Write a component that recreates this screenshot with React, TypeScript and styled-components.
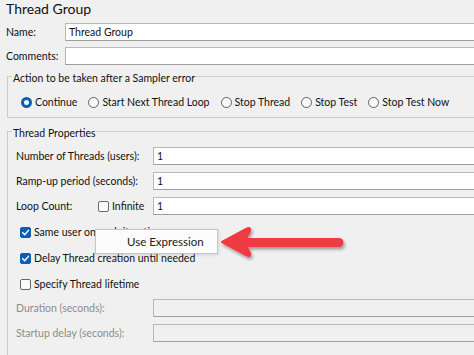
import styled, { createGlobalStyle } from "styled-components";

const GlobalStyle = createGlobalStyle`
	html, body {
		margin: 0;
		padding: 0;
		background: #f0f0f0;
		overflow: hidden;
	}
	body {
		font-family: Lato, "Noto Sans", sans-serif;
		font-size: 10.5px;
		color: #111111;
	}
`;

const Page = styled.div`
	position: relative;
	width: 560px;
	padding-left: 6px;
`;

const Title = styled.div`
	font-size: 14px;
	line-height: 18px;
	height: 18px;
`;

const TopRow = styled.div<{ $top: number }>`
	display: grid;
	grid-template-columns: 59px 1fr;
	align-items: center;
	margin-top: ${(p) => p.$top}px;
`;

const TextField = styled.div<{ $disabled?: boolean }>`
	height: 18px;
	box-sizing: border-box;
	border: 1px solid #b8b8b8;
	border-bottom-color: #9e9e9e;
	background: ${(p) => (p.$disabled ? "#f0f0f0" : "#ffffff")};
	padding-left: 3px;
	line-height: 16px;
`;

const Group = styled.fieldset<{ $top: number; $bottom: number }>`
	margin: ${(p) => p.$top}px 0 0 1px;
	padding: 0 0 ${(p) => p.$bottom}px 4px;
	border: 1px solid #cbcbcb;
	min-width: 0;
`;

const Legend = styled.legend`
	padding: 4px 1px 0;
	line-height: 14px;
`;

const RadioRow = styled.div`
	display: flex;
	align-items: center;
	gap: 11px;
	height: 18px;
	margin-top: 8px;
	padding-left: 9px;
`;

const Option = styled.label`
	display: flex;
	align-items: center;
	gap: 3px;
	white-space: nowrap;
`;

const Radio = styled.span<{ $checked?: boolean }>`
	width: 11px;
	height: 11px;
	box-sizing: border-box;
	border-radius: 50%;
	border: ${(p) => (p.$checked ? "3px solid #0a5fb4" : "1px solid #5f5f5f")};
	background: #fafafa;
`;

const Check = styled.span<{ $checked?: boolean }>`
	width: 11px;
	height: 11px;
	box-sizing: border-box;
	border-radius: 2px;
	border: 1px solid ${(p) => (p.$checked ? "#0a5fb4" : "#6a6a6a")};
	background: ${(p) => (p.$checked ? "#0a5fb4" : "#fafafa")};
	display: flex;
	align-items: center;
	justify-content: center;
`;

const FieldRow = styled.div<{ $top: number }>`
	display: grid;
	grid-template-columns: 137px 1fr;
	align-items: center;
	margin-top: ${(p) => p.$top}px;
	padding-left: 4px;
`;

const LoopLabel = styled.div`
	display: grid;
	grid-template-columns: 82px 1fr;
	align-items: center;
`;

const Label = styled.span<{ $disabled?: boolean }>`
	color: ${(p) => (p.$disabled ? "#8d8d8d" : "#111111")};
	white-space: nowrap;
`;

const CheckRow = styled.div<{ $top: number }>`
	height: 18px;
	display: flex;
	align-items: center;
	margin-top: ${(p) => p.$top}px;
	padding-left: 8px;
`;

const Popup = styled.div`
	position: absolute;
	left: 95px;
	top: 229px;
	width: 123px;
	height: 25px;
	box-sizing: border-box;
	background: #fbfbfb;
	border: 1px solid #c6c6c6;
	box-shadow: 1px 1px 3px rgba(0, 0, 0, 0.12);
	padding-left: 31px;
	line-height: 23px;
	font-size: 11.5px;
	color: #202020;
	white-space: nowrap;
`;

const Arrow = styled.svg`
	position: absolute;
	left: 215px;
	top: 220px;
	overflow: visible;
`;

function Tick() {
	return (
		<svg width='9' height='9' viewBox='0 0 9 9'>
			<path
				d='M1.5 4.6 L3.6 6.7 L7.6 2.2'
				fill='none'
				stroke='#fff'
				strokeWidth='1.4'
				strokeLinecap='round'
				strokeLinejoin='round'
			/>
		</svg>
	);
}

function CheckOption({ label, checked }: { label: string; checked?: boolean }) {
	return (
		<Option>
			<Check $checked={checked}>{checked ? <Tick /> : null}</Check>
			<span>{label}</span>
		</Option>
	);
}

const radios = [
	"Continue",
	"Start Next Thread Loop",
	"Stop Thread",
	"Stop Test",
	"Stop Test Now",
];

export default function App() {
	return (
		<>
			<GlobalStyle />
			<Page>
				<Title>Thread Group</Title>
				<TopRow $top={5}>
					<Label>Name:</Label>
					<TextField>Thread Group</TextField>
				</TopRow>
				<TopRow $top={6}>
					<Label>Comments:</Label>
					<TextField />
				</TopRow>

				<Group $top={2} $bottom={6}>
					<Legend>Action to be taken after a Sampler error</Legend>
					<RadioRow>
						{radios.map((r, i) => (
							<Option key={r}>
								<Radio $checked={i === 0} />
								<span>{r}</span>
							</Option>
						))}
					</RadioRow>
				</Group>

				<Group $top={4} $bottom={30}>
					<Legend>Thread Properties</Legend>
					<FieldRow $top={7}>
						<Label>Number of Threads (users):</Label>
						<TextField>1</TextField>
					</FieldRow>
					<FieldRow $top={7}>
						<Label>Ramp-up period (seconds):</Label>
						<TextField>1</TextField>
					</FieldRow>
					<FieldRow $top={7}>
						<LoopLabel>
							<Label>Loop Count:</Label>
							<CheckOption label='Infinite' />
						</LoopLabel>
						<TextField>1</TextField>
					</FieldRow>
					<CheckRow $top={8}>
						<CheckOption label='Same user on each iteration' checked />
					</CheckRow>
					<CheckRow $top={8}>
						<CheckOption label='Delay Thread creation until needed' checked />
					</CheckRow>
					<CheckRow $top={8}>
						<CheckOption label='Specify Thread lifetime' />
					</CheckRow>
					<FieldRow $top={6}>
						<Label $disabled>Duration (seconds):</Label>
						<TextField $disabled />
					</FieldRow>
					<FieldRow $top={7}>
						<Label $disabled>Startup delay (seconds):</Label>
						<TextField $disabled />
					</FieldRow>
				</Group>

				<Popup>Use Expression</Popup>
				<Arrow width='135' height='45' viewBox='0 0 135 45'>
					<defs>
						<filter id='arrowShadow' x='-10%' y='-30%' width='130%' height='180%'>
							<feDropShadow dx='1.5' dy='2.5' stdDeviation='1.5' floodColor='#000' floodOpacity='0.35' />
						</filter>
					</defs>
					<g filter='url(#arrowShadow)' fill='#ef3a42' stroke='#ef3a42'>
						<line x1='30' y1='22.5' x2='124' y2='22.5' strokeWidth='9' strokeLinecap='round' />
						<path
							d='M7 22 L32 8.5 Q36 7 35 11 L29 22 L35 33 Q36 37 32 35.5 Z'
							strokeWidth='2'
							strokeLinejoin='round'
						/>
					</g>
				</Arrow>
			</Page>
		</>
	);
}
